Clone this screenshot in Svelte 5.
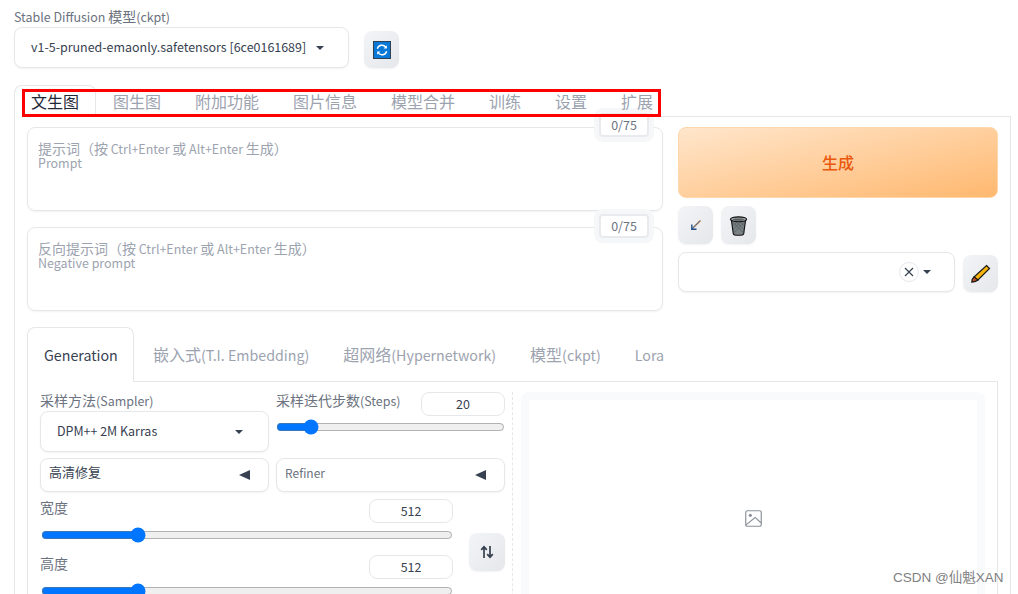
<script>
  // txt2img tab of the webui, static state
  const mainTabs = ["图生图", "附加功能", "图片信息", "模型合并", "训练", "设置", "扩展"];
  const subTabs = ["嵌入式(T.I. Embedding)", "超网络(Hypernetwork)", "模型(ckpt)", "Lora"];

  // latin runs get their own span, the CJK font draws them too wide otherwise
  function runs(text) {
    return text.match(/[\x20-\x7e]+|[^\x20-\x7e]+/g).map((t) => ({ t, lat: /^[\x20-\x7e]/.test(t) }));
  }
</script>

{#snippet txt(text)}{#each runs(text) as r}<span class:lat={r.lat}>{r.t}</span>{/each}{/snippet}

<div class="page">
  <div class="ckpt">
    <span class="label">{@render txt("Stable Diffusion 模型(ckpt)")}</span>
    <div class="ckpt-row">
      <div class="select ckpt-select">
        <span class="lift">{@render txt("v1-5-pruned-emaonly.safetensors [6ce0161689]")}</span>
        <svg class="caret" viewBox="0 0 10 6"><path d="M1 1h8L5 5z" /></svg>
      </div>
      <button class="tool refresh" aria-label="刷新">
        <svg viewBox="0 0 19 19" width="18" height="18">
          <rect x="0.5" y="0.5" width="18" height="18" fill="#0a78d7" stroke="#2b3a4a" />
          <path d="M4.6 8.2A5 5 0 0 1 13.4 6.4M14.4 10.8A5 5 0 0 1 5.6 12.6" fill="none" stroke="#fff" stroke-width="1.5" />
          <path d="M14.6 4.4v3.4h-3.4zM4.4 14.6v-3.4h3.4z" fill="#fff" />
        </svg>
      </button>
    </div>
  </div>

  <nav class="main-tabs">
    <span class="main-tab active">文生图</span>
    {#each mainTabs as tab}
      <span class="main-tab">{tab}</span>
    {/each}
    <div class="annotation"></div>
  </nav>

  <section class="panel">
    <div class="top">
      <div class="prompts">
        <div class="prompt">
          <div class="prompt-input">
            {@render txt("提示词（按 Ctrl+Enter 或 Alt+Enter 生成）")}<br />{@render txt("Prompt")}
          </div>
          <span class="counter">{@render txt("0/75")}</span>
        </div>
        <div class="prompt">
          <div class="prompt-input">
            {@render txt("反向提示词（按 Ctrl+Enter 或 Alt+Enter 生成）")}<br />{@render txt("Negative prompt")}
          </div>
          <span class="counter second">{@render txt("0/75")}</span>
        </div>
      </div>

      <div class="actions">
        <button class="generate">生成</button>
        <div class="tool-row">
          <button class="tool tall" aria-label="读取参数">
            <svg viewBox="0 0 14 14" width="14" height="14">
              <path d="M11.500 2.500 3.200 10.800" stroke="#e8872c" stroke-width="1.600" fill="none" />
              <path d="M11 2.800 3 10.800" stroke="#1f6cc0" stroke-width="1" fill="none" />
              <path d="M2.800 6.500v4.700h4.700" stroke="#1f4f8f" stroke-width="1.400" fill="none" />
            </svg>
          </button>
          <button class="tool tall" aria-label="清除">
            <svg viewBox="0 0 20 22" width="19" height="21">
              <path d="M2.500 5 4.500 19.500c.2 1 3 1.800 5.500 1.800s5.300-.8 5.500-1.800L17.500 5z" fill="#7b8286" stroke="#111" stroke-width="1.200" />
              <path d="M4 7.500 15.500 19M8 7.500l8 8M12 7.500l4 4M16 7.500 4.800 19M12 7.500 4.300 15M8 7.500l-4 4" stroke="#4d5356" stroke-width="0.700" fill="none" />
              <ellipse cx="10" cy="4.500" rx="8.500" ry="2.600" fill="#9aa0a3" stroke="#111" stroke-width="1.200" />
              <ellipse cx="10" cy="4.800" rx="6" ry="1.300" fill="#5b6063" />
            </svg>
          </button>
        </div>
        <div class="style-row">
          <div class="select style-select">
            <span class="clear">
              <svg viewBox="0 0 10 10" width="10" height="10"><path d="M1 1l8 8M9 1l-8 8" stroke="#374151" stroke-width="1.200" /></svg>
            </span>
            <svg class="caret" viewBox="0 0 10 6"><path d="M1 1h8L5 5z" /></svg>
          </div>
          <button class="tool pencil" aria-label="编辑">
            <svg viewBox="0 0 22 22" width="22" height="22">
              <path d="M16.500 2.500 19.500 5.500 8 17l-4-3z" fill="#f5b30c" stroke="#1a1a1a" stroke-width="1.200" />
              <path d="M4 14c-1.500 1-2 3-2.200 5.200C4 19 6.500 18.500 8 17z" fill="#c8501e" stroke="#1a1a1a" stroke-width="1.200" />
            </svg>
          </button>
        </div>
      </div>
    </div>

    <div class="sub-tabs">
      <span class="sub-tab active">{@render txt("Generation")}</span>
      {#each subTabs as tab}
        <span class="sub-tab">{@render txt(tab)}</span>
      {/each}
    </div>

    <div class="sub-panel">
      <div class="settings">
        <div class="pair">
          <div>
            <span class="label">{@render txt("采样方法(Sampler)")}</span>
            <div class="select sampler">
              <span class="lift">{@render txt("DPM++ 2M Karras")}</span>
              <svg class="caret" viewBox="0 0 10 6"><path d="M1 1h8L5 5z" /></svg>
            </div>
          </div>
          <div>
            <div class="slider-head">
              <span class="label">{@render txt("采样迭代步数(Steps)")}</span>
              <span class="num">{@render txt("20")}</span>
            </div>
            <input class="range steps" type="range" min="1" max="150" value="20" />
          </div>
        </div>

        <div class="pair accordions">
          <div class="accordion"><span class="acc-cn">高清修复</span><span class="arrow"></span></div>
          <div class="accordion"><span class="acc-en">{@render txt("Refiner")}</span><span class="arrow"></span></div>
        </div>

        <div class="size">
          <div class="sliders">
            <div class="size-item">
              <div class="slider-head"><span class="label">宽度</span><span class="num">{@render txt("512")}</span></div>
              <input class="range" type="range" min="64" max="2048" step="8" value="512" />
            </div>
            <div class="size-item">
              <div class="slider-head"><span class="label">高度</span><span class="num">{@render txt("512")}</span></div>
              <input class="range" type="range" min="64" max="2048" step="8" value="512" />
            </div>
          </div>
          <button class="tool swap" aria-label="交换">
            <svg viewBox="0 0 14 14" width="14" height="14">
              <path d="M4 13V2M1.200 4.800 4 1.800l2.800 3M10 1v11M7.200 9.200l2.800 3 2.800-3" fill="none" stroke="#374151" stroke-width="1.700" />
            </svg>
          </button>
        </div>
      </div>

      <div class="gallery">
        <div class="gallery-inner">
          <svg viewBox="0 0 16 16" width="17" height="17">
            <rect x="0.700" y="0.700" width="14.600" height="14.600" rx="1.500" fill="none" stroke="#8b9099" stroke-width="1.100" />
            <circle cx="5" cy="5" r="1.500" fill="#8b9099" />
            <path d="M1 14 9.500 7l5.500 5" fill="none" stroke="#8b9099" stroke-width="1.100" />
          </svg>
        </div>
      </div>
    </div>
  </section>

  <span class="watermark">CSDN @仙魁XAN</span>
</div>

<style>
  :global(html), :global(body) {
    margin: 0;
    overflow: hidden;
    background: #fff;
  }

  .page {
    position: relative;
    box-sizing: border-box;
    width: 1018px;
    height: 594px;
    overflow: hidden;
    padding: 0 7px 0 14px;
    font-family: "Noto Sans CJK SC", "Noto Sans", sans-serif;
    font-size: 14px;
    color: #374151;
  }

  .lat {
    font-size: 0.89em;
    line-height: 0;
  }

  .lift {
    padding-bottom: 3px;
  }

  button {
    font-family: inherit;
    padding: 0;
    cursor: pointer;
  }

  .label {
    display: block;
    font-size: 14px;
    line-height: 16px;
    color: #6b7280;
  }

  .ckpt {
    padding-top: 8px;
  }

  .ckpt-row {
    display: flex;
    align-items: flex-end;
    gap: 15px;
    margin-top: 3px;
  }

  .select {
    box-sizing: border-box;
    display: flex;
    align-items: center;
    background: #fff;
    border: 1px solid #e5e7eb;
    border-radius: 8px;
    box-shadow: 0 1px 2px rgba(0, 0, 0, 0.05);
  }

  .caret {
    width: 10px;
    height: 6px;
    fill: #374151;
  }

  .ckpt-select {
    width: 335px;
    height: 41px;
    padding: 0 23px 0 16px;
    justify-content: space-between;
    white-space: nowrap;
  }

  .tool {
    display: flex;
    align-items: center;
    justify-content: center;
    box-sizing: border-box;
    border: 0;
    border-radius: 8px;
    background: linear-gradient(to bottom right, #f3f4f6, #e5e7eb);
    box-shadow: 0 1px 2px rgba(0, 0, 0, 0.05);
  }

  .refresh {
    width: 35px;
    height: 37px;
  }

  .main-tabs {
    position: relative;
    display: flex;
    height: 32px;
    margin-top: 17px;
    margin-bottom: -1px;
    z-index: 3;
  }

  .main-tab {
    box-sizing: border-box;
    height: 32px;
    padding: 0 17px;
    font-size: 16px;
    line-height: 32px;
    color: #9ca3af;
    white-space: nowrap;
  }

  .main-tab.active {
    color: #1f2937;
    background: #fff;
    padding: 0 16px;
    border: 1px solid #e5e7eb;
    border-bottom: 0;
    border-radius: 8px 8px 0 0;
    line-height: 30px;
  }

  .annotation {
    position: absolute;
    left: 8px;
    top: 4px;
    width: 639px;
    height: 28px;
    box-sizing: border-box;
    border: 3px solid #f00;
    z-index: 3;
  }

  .panel {
    box-sizing: border-box;
    height: 600px;
    border: 1px solid #e5e7eb;
    padding: 10px 12px;
  }

  .top {
    display: grid;
    grid-template-columns: 636px 320px;
    gap: 15px;
  }

  .prompts {
    display: flex;
    flex-direction: column;
    gap: 16px;
  }

  .prompt {
    position: relative;
    height: 84px;
  }

  .prompt-input {
    box-sizing: border-box;
    height: 100%;
    border: 1px solid #e5e7eb;
    border-radius: 8px;
    padding: 13px 10px;
    font-size: 14px;
    line-height: 14px;
    color: #9ca3af;
    box-shadow: 0 1px 2px rgba(0, 0, 0, 0.05);
  }

  .counter {
    position: absolute;
    right: 14px;
    top: -14px;
    box-sizing: border-box;
    width: 50px;
    height: 24px;
    border: 2px solid #e9eaed;
    border-radius: 4px;
    background: #fff;
    box-shadow: 0 0 0 5px #f6f7f8;
    font-size: 14px;
    line-height: 18px;
    text-align: center;
    color: #6b7280;
    z-index: 2;
  }

  .counter.second {
    top: -13px;
  }

  .actions {
    display: flex;
    flex-direction: column;
    gap: 8px;
  }

  .generate {
    height: 71px;
    padding-bottom: 2px;
    border: 1px solid #fed7aa;
    border-radius: 8px;
    background: linear-gradient(to bottom right, #ffe6cc, #ffb86f);
    color: #ea580c;
    font-size: 16px;
    font-weight: 500;
  }

  .tool-row {
    display: flex;
    gap: 8px;
  }

  .tool.tall {
    width: 35px;
    height: 38px;
  }

  .style-row {
    display: flex;
    align-items: flex-end;
    gap: 8px;
  }

  .style-select {
    position: relative;
    width: 277px;
    height: 40px;
    padding-left: 220px;
    gap: 3px;
  }

  .clear {
    display: flex;
    align-items: center;
    justify-content: center;
    box-sizing: border-box;
    width: 20px;
    height: 20px;
    border: 1px solid #e5e7eb;
    border-radius: 50%;
  }

  .tool.pencil {
    width: 35px;
    height: 37px;
  }

  .sub-tabs {
    display: flex;
    height: 55px;
    margin-top: 16px;
    margin-bottom: -1px;
    position: relative;
  }

  .sub-tab {
    box-sizing: border-box;
    padding: 0 17px;
    font-size: 16px;
    line-height: 55px;
    color: #9ca3af;
    white-space: nowrap;
  }

  .sub-tab.active {
    width: 107px;
    margin-right: 2px;
    padding: 0 16px;
    background: #fff;
    color: #374151;
    border: 1px solid #e5e7eb;
    border-bottom: 0;
    border-radius: 8px 8px 0 0;
    line-height: 53px;
  }

  .sub-panel {
    box-sizing: border-box;
    height: 300px;
    display: grid;
    grid-template-columns: 465px 464px;
    gap: 16px;
    border: 1px solid #e5e7eb;
    padding: 10px 12px;
  }

  .settings {
    position: relative;
    display: flex;
    flex-direction: column;
  }

  .settings::after {
    content: "";
    position: absolute;
    top: 0;
    bottom: 0;
    right: -8px;
    border-right: 1px dashed #e5e7eb;
  }

  .pair {
    display: grid;
    grid-template-columns: 229px 229px;
    gap: 7px;
    height: 66px;
  }

  .pair .label {
    white-space: nowrap;
  }

  .sampler {
    width: 229px;
    height: 41px;
    margin-top: 3px;
    padding: 0 24px 0 16px;
    justify-content: space-between;
  }

  .slider-head {
    display: flex;
    justify-content: space-between;
    align-items: flex-start;
  }

  .size-item .label {
    margin-top: 0;
  }

  .num {
    box-sizing: border-box;
    width: 84px;
    height: 24px;
    border: 1px solid #e5e7eb;
    border-radius: 8px;
    text-align: center;
    font-size: 14px;
    line-height: 20px;
    background: #fff;
  }

  .range {
    display: block;
    width: 412px;
    margin: 4px 0 0 1px;
  }

  .range.steps {
    width: 229px;
    margin: 3px 0 0;
  }

  .accordions {
    height: 34px;
  }

  .accordion {
    box-sizing: border-box;
    height: 34px;
    display: flex;
    align-items: center;
    justify-content: space-between;
    padding: 0 18px 0 8px;
    border: 1px solid #e5e7eb;
    border-radius: 8px;
    box-shadow: 0 1px 2px rgba(0, 0, 0, 0.05);
    background: #fff;
  }

  .acc-cn {
    font-size: 13px;
    line-height: 14px;
    padding-bottom: 7px;
    color: #374151;
  }

  .acc-en {
    font-size: 13.500px;
    line-height: 14px;
    padding-bottom: 7px;
    color: #6b7280;
  }

  .arrow {
    width: 0;
    height: 0;
    border-top: 5.500px solid transparent;
    border-bottom: 5.500px solid transparent;
    border-right: 11px solid #374151;
  }

  .size {
    display: flex;
    gap: 16px;
    margin-top: 7px;
    align-items: flex-start;
  }

  .sliders {
    width: 413px;
    display: flex;
    flex-direction: column;
  }

  .size-item {
    height: 56px;
  }

  .swap {
    width: 36px;
    height: 38px;
    margin-top: 34px;
  }

  .gallery {
    box-sizing: border-box;
    background: #f9fafb;
    border-radius: 8px;
    padding: 8px;
    height: 300px;
  }

  .gallery-inner {
    display: flex;
    align-items: center;
    justify-content: center;
    height: 236px;
    background: #fff;
  }

  .watermark {
    position: absolute;
    left: 893px;
    top: 569px;
    font-family: "Liberation Sans", "Noto Sans CJK SC", sans-serif;
    font-size: 13.500px;
    line-height: 18px;
    color: #7f7f7f;
    white-space: nowrap;
    z-index: 5;
  }
</style>
